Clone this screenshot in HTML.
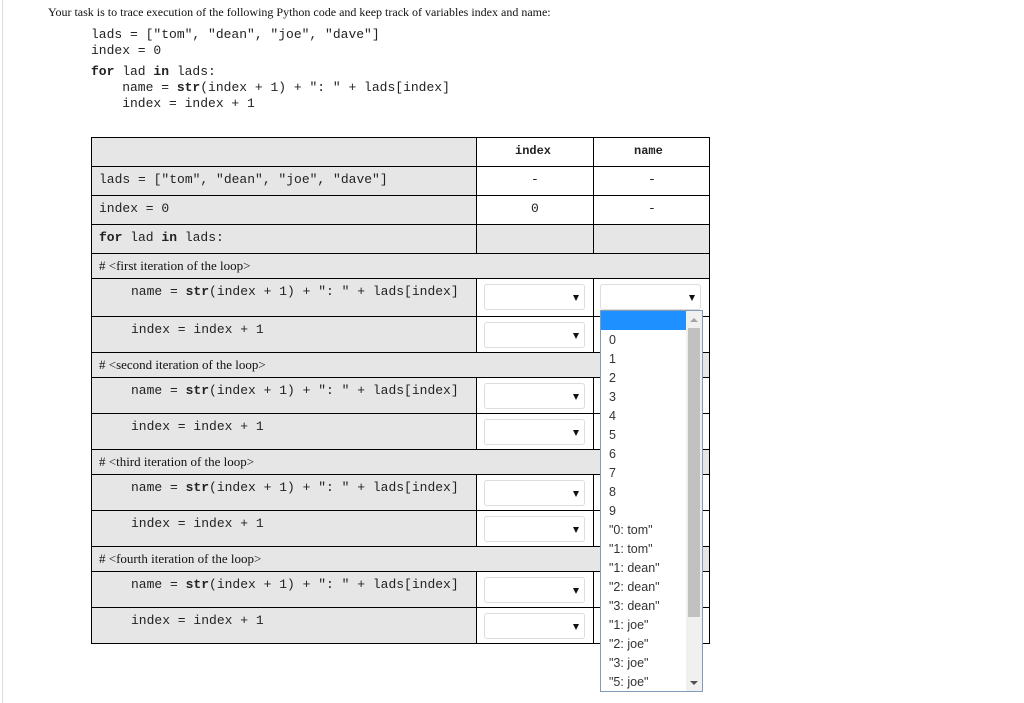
<!DOCTYPE html>
<html><head><meta charset="utf-8"><style>
body{margin:0;width:1024px;height:703px;background:#fff;position:relative;overflow:hidden;font-family:"Liberation Serif",serif;}
.a{position:absolute}
.m{font-family:"Liberation Mono",monospace;font-size:13px;color:#222;white-space:pre}
.s{font-size:13px;color:#111;white-space:pre}
.c{position:absolute;background:#e6e6e6;border:1px solid #000;box-sizing:border-box}
.w{position:absolute;background:#fff;border:1px solid #000;box-sizing:border-box}
.sel{position:absolute;width:101px;height:26px;border:1px solid #ddd;border-radius:3px;background:#fff;box-sizing:border-box}
.sel:after{content:"";position:absolute;right:5px;top:10px;border-left:3.5px solid transparent;border-right:3.5px solid transparent;border-top:6px solid #111}
.it{position:absolute;left:8px;font-family:"Liberation Sans",sans-serif;font-size:12.5px;color:#333;}
</style></head><body>
<div class="a" style="left:2px;top:0;width:1px;height:703px;background:#ddd"></div>
<div class="a s" style="left:48px;top:5px;font-size:12px">Your task is to trace execution of the following Python code and keep track of variables index and name:</div>
<div class="a m" style="left:91px;top:27px;line-height:16px">lads = ["tom", "dean", "joe", "dave"]
index = 0</div>
<div class="a m" style="left:91px;top:64px;line-height:16px"><b>for</b> lad <b>in</b> lads:
    name = <b>str</b>(index + 1) + ": " + lads[index]
    index = index + 1</div>

<div class="c" style="left:91px;top:137px;width:386px;height:30px"></div>
<div class="w" style="left:476px;top:137px;width:118px;height:30px"></div>
<div class="w" style="left:593px;top:137px;width:117px;height:30px"></div>
<div class="a m" style="left:515px;top:144px;font-weight:bold;font-size:12px">index</div>
<div class="a m" style="left:634px;top:144px;font-weight:bold;font-size:12px">name</div>

<div class="c" style="left:91px;top:166px;width:386px;height:30px"></div><div class="a m" style="left:99px;top:172px">lads = ["tom", "dean", "joe", "dave"]</div>
<div class="w" style="left:476px;top:166px;width:118px;height:30px"></div><div class="w" style="left:593px;top:166px;width:117px;height:30px"></div>
<div class="a m" style="left:531px;top:172px">-</div><div class="a m" style="left:648px;top:172px">-</div>

<div class="c" style="left:91px;top:195px;width:386px;height:30px"></div><div class="a m" style="left:99px;top:201px">index = 0</div>
<div class="w" style="left:476px;top:195px;width:118px;height:30px"></div><div class="w" style="left:593px;top:195px;width:117px;height:30px"></div>
<div class="a m" style="left:531px;top:201px">0</div><div class="a m" style="left:648px;top:201px">-</div>

<div class="c" style="left:91px;top:224px;width:386px;height:30px"></div><div class="a m" style="left:99px;top:230px"><b>for</b> lad <b>in</b> lads:</div>
<div class="c" style="left:476px;top:224px;width:118px;height:30px"></div><div class="c" style="left:593px;top:224px;width:117px;height:30px"></div>

<div id="iters"></div>
<script>
var tops=[253,352,449,546],names=["first","second","third","fourth"],h="";
for(var i=0;i<4;i++){var t=tops[i];var n1=t+25,n2=n1+(i==0?38:36),e=n2+36;
h+='<div class="c" style="left:91px;top:'+t+'px;width:619px;height:26px"></div><div class="a s" style="left:99px;top:'+(t+5)+'px"># &lt;'+names[i]+' iteration of the loop&gt;</div>';
h+='<div class="c" style="left:91px;top:'+n1+'px;width:386px;height:'+(n2-n1+1)+'px"></div><div class="a m" style="left:131px;top:'+(n1+6)+'px">name = <b>str</b>(index + 1) + ": " + lads[index]</div>';
h+='<div class="w" style="left:476px;top:'+n1+'px;width:118px;height:'+(n2-n1+1)+'px"></div><div class="w" style="left:593px;top:'+n1+'px;width:117px;height:'+(n2-n1+1)+'px"></div>';
h+='<div class="sel" style="left:484px;top:'+(n1+6)+'px"></div><div class="sel" style="left:600px;top:'+(n1+6)+'px"></div>';
h+='<div class="c" style="left:91px;top:'+n2+'px;width:386px;height:'+(e-n2+1)+'px"></div><div class="a m" style="left:131px;top:'+(n2+6)+'px">index = index + 1</div>';
h+='<div class="w" style="left:476px;top:'+n2+'px;width:118px;height:'+(e-n2+1)+'px"></div><div class="w" style="left:593px;top:'+n2+'px;width:117px;height:'+(e-n2+1)+'px"></div>';
h+='<div class="sel" style="left:484px;top:'+(n2+6)+'px"></div>';}
document.getElementById("iters").innerHTML=h;
</script>

<div class="a" style="left:600px;top:310px;width:103px;height:382px;background:#fff;border:1px solid #7f9db9;box-sizing:border-box;overflow:hidden">
<div class="a" style="left:0;top:0;width:85px;height:19px;background:#1e90ff"></div>
<div class="a" style="left:85px;top:0;width:16px;height:380px;background:#f0f0f0"></div>
<div class="a" style="left:87px;top:17px;width:12px;height:289px;background:#c1c1c1"></div>
<div class="a" style="left:89px;top:7px;border-left:4px solid transparent;border-right:4px solid transparent;border-bottom:4px solid #a3a3a3"></div>
<div class="a" style="left:89px;top:370px;border-left:4px solid transparent;border-right:4px solid transparent;border-top:4px solid #505050"></div>
<div id="items"></div>
</div>
<script>
var it=["0","1","2","3","4","5","6","7","8","9",'"0: tom"','"1: tom"','"1: dean"','"2: dean"','"3: dean"','"1: joe"','"2: joe"','"3: joe"','"5: joe"'],s="";
for(var k=0;k<it.length;k++)s+='<div class="it" style="top:'+(22+k*19)+'px">'+it[k]+'</div>';
document.getElementById("items").innerHTML=s;
</script>
</body></html>
